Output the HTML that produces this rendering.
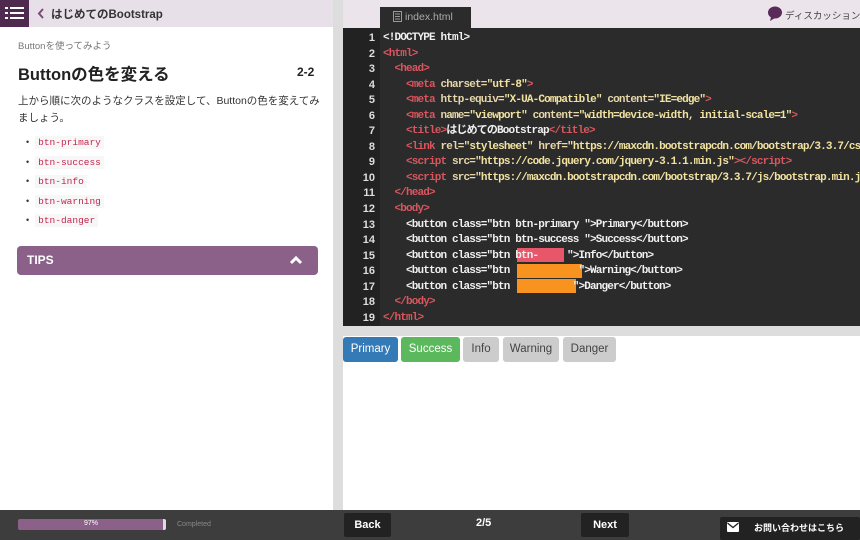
<!DOCTYPE html>
<html><head><meta charset="utf-8"><style>
*{margin:0;padding:0;box-sizing:border-box}
body{width:860px;height:540px;overflow:hidden;position:relative;background:#fff;font-family:"Liberation Sans","Noto Sans CJK JP",sans-serif}
.abs{position:absolute;white-space:nowrap}
.code{font-family:"Liberation Mono","Noto Sans CJK JP",monospace;font-size:11px;letter-spacing:-0.85px;font-weight:bold;color:#f0f0f0;white-space:pre}
.t{color:#d9565e}.a{color:#e6d6a8}.s{color:#f2e2a0}
.li{position:absolute;left:26px;font-size:9px;color:#333}
.li span{font-family:"Liberation Mono",monospace;font-size:9.5px;color:#c7254e;background:#f7f7f7;padding:1px 3px;margin-left:6px}
.btn{position:absolute;top:337px;height:25px;border-radius:3px;font-size:11.5px;line-height:25px;text-align:center}
</style></head><body>
<div class="abs" style="left:0;top:0;width:333px;height:27px;background:#e8e0e8"></div>
<div class="abs" style="left:0;top:0;width:29px;height:27px;background:#4e2a4e"></div>
<svg class="abs" style="left:5px;top:6px" width="19" height="15"><g fill="#fff"><rect x="0" y="1" width="3" height="2"/><rect x="5" y="1" width="14" height="2"/><rect x="0" y="6" width="3" height="2"/><rect x="5" y="6" width="14" height="2"/><rect x="0" y="11" width="3" height="2"/><rect x="5" y="11" width="14" height="2"/></g></svg>
<svg class="abs" style="left:37px;top:8px" width="8" height="11"><path d="M6 1L2 5.5L6 10" stroke="#7a4a7a" stroke-width="2" fill="none"/></svg>
<div class="abs" style="left:51px;top:6px;font-size:11.5px;font-weight:bold;color:#333">はじめてのBootstrap</div>
<div class="abs" style="left:18px;top:38px;font-size:9.5px;color:#777">Buttonを使ってみよう</div>
<div class="abs" style="left:18px;top:61px;font-size:16.5px;font-weight:bold;color:#222">Buttonの色を変える</div>
<div class="abs" style="left:297px;top:65px;font-size:12px;font-weight:bold;color:#222">2-2</div>
<div style="position:absolute;left:18px;top:93px;width:305px;font-size:10.5px;line-height:17px;color:#333">上から順に次のようなクラスを設定して、Buttonの色を変えてみましょう。</div>
<div class="li" style="top:137px">•<span>btn-primary</span></div>
<div class="li" style="top:157px">•<span>btn-success</span></div>
<div class="li" style="top:176px">•<span>btn-info</span></div>
<div class="li" style="top:196px">•<span>btn-warning</span></div>
<div class="li" style="top:215px">•<span>btn-danger</span></div>
<div class="abs" style="left:17px;top:246px;width:301px;height:29px;background:#8b6189;border-radius:4px"></div>
<div class="abs" style="left:27px;top:253px;font-size:12px;font-weight:bold;color:#fff">TIPS</div>
<svg class="abs" style="left:289px;top:255px" width="14" height="10"><path d="M2 8L7 3L12 8" stroke="#fff" stroke-width="3" fill="none"/></svg>
<div class="abs" style="left:333px;top:0;width:10px;height:510px;background:#ddd"></div>
<div class="abs" style="left:343px;top:0;width:517px;height:28px;background:#ebe5eb"></div>
<div class="abs" style="left:380px;top:7px;width:91px;height:21px;background:#2b2b2b"></div>
<svg class="abs" style="left:393px;top:11px" width="9" height="11"><rect x="0.5" y="0.5" width="8" height="10" fill="none" stroke="#999"/><path d="M2 3h5M2 5.5h5M2 8h5" stroke="#999"/></svg>
<div class="abs" style="left:405px;top:11px;font-size:10.5px;color:#aaa">index.html</div>
<svg class="abs" style="left:767px;top:6px" width="16" height="15"><ellipse cx="8" cy="6.5" rx="7" ry="6" fill="#5a2a5a"/><path d="M4 11L3 15L8 12Z" fill="#5a2a5a"/></svg>
<div class="abs" style="left:785px;top:8px;font-size:9.5px;color:#444">ディスカッション</div>
<div class="abs" style="left:343px;top:28px;width:517px;height:298px;background:#2b2b2b"></div>
<div class="abs" style="left:343px;top:28px;width:37px;height:298px;background:#222"></div>
<div class="abs" style="left:517px;top:248px;width:47px;height:14px;background:#e8566a"></div>
<div class="abs" style="left:517px;top:264px;width:65px;height:14px;background:#f7931e"></div>
<div class="abs" style="left:517px;top:279px;width:59px;height:14px;background:#f7931e"></div>
<div class="abs code" style="left:383px;top:31px;line-height:15.55px">&lt;!DOCTYPE html&gt;
<span class="t">&lt;html&gt;</span>
  <span class="t">&lt;head&gt;</span>
    <span class="t">&lt;meta</span> <span class="a">charset=</span><span class="s">"utf-8"</span><span class="t">&gt;</span>
    <span class="t">&lt;meta</span> <span class="a">http-equiv=</span><span class="s">"X-UA-Compatible"</span> <span class="a">content=</span><span class="s">"IE=edge"</span><span class="t">&gt;</span>
    <span class="t">&lt;meta</span> <span class="a">name=</span><span class="s">"viewport"</span> <span class="a">content=</span><span class="s">"width=device-width, initial-scale=1"</span><span class="t">&gt;</span>
    <span class="t">&lt;title&gt;</span>はじめてのBootstrap<span class="t">&lt;/title&gt;</span>
    <span class="t">&lt;link</span> <span class="a">rel=</span><span class="s">"stylesheet"</span> <span class="a">href=</span><span class="s">"https://maxcdn.bootstrapcdn.com/bootstrap/3.3.7/cs</span>
    <span class="t">&lt;script</span> <span class="a">src=</span><span class="s">"https://code.jquery.com/jquery-3.1.1.min.js"</span><span class="t">&gt;&lt;/script&gt;</span>
    <span class="t">&lt;script</span> <span class="a">src=</span><span class="s">"https://maxcdn.bootstrapcdn.com/bootstrap/3.3.7/js/bootstrap.min.j</span>
  <span class="t">&lt;/head&gt;</span>
  <span class="t">&lt;body&gt;</span>
    &lt;button class="btn btn-primary "&gt;Primary&lt;/button&gt;
    &lt;button class="btn btn-success "&gt;Success&lt;/button&gt;
    &lt;button class="btn btn-     "&gt;Info&lt;/button&gt;
    &lt;button class="btn            "&gt;Warning&lt;/button&gt;
    &lt;button class="btn           "&gt;Danger&lt;/button&gt;
  <span class="t">&lt;/body&gt;</span>
<span class="t">&lt;/html&gt;</span></div>
<div class="abs" style="left:343px;top:31px;width:32px;text-align:right;font-size:11px;font-weight:bold;color:#ddd;line-height:15.55px;white-space:pre">1
2
3
4
5
6
7
8
9
10
11
12
13
14
15
16
17
18
19</div>
<div class="abs" style="left:343px;top:326px;width:517px;height:10px;background:#ddd"></div>
<div class="btn" style="left:343px;width:55px;background:#337ab7;color:#fff">Primary</div>
<div class="btn" style="left:401px;width:59px;background:#5cb85c;color:#fff">Success</div>
<div class="btn" style="left:463px;width:36px;background:#ccc;color:#444">Info</div>
<div class="btn" style="left:503px;width:56px;background:#ccc;color:#444">Warning</div>
<div class="btn" style="left:563px;width:53px;background:#ccc;color:#444">Danger</div>
<div class="abs" style="left:0;top:510px;width:860px;height:30px;background:#3d3d3d"></div>
<div class="abs" style="left:18px;top:519px;width:148px;height:11px;background:#8b6189;border-radius:2px;border-right:3px solid #ddd"></div>
<div class="abs" style="left:84px;top:520px;font-size:7px;color:#fff">97%</div>
<div class="abs" style="left:177px;top:521px;font-size:7px;color:#888">Completed</div>
<div class="abs" style="left:344px;top:513px;width:47px;height:24px;background:#222;border-radius:2px;color:#fff;font-size:11px;font-weight:bold;text-align:center;line-height:24px">Back</div>
<div class="abs" style="left:476px;top:517px;font-size:11px;font-weight:bold;color:#fff">2/5</div>
<div class="abs" style="left:581px;top:513px;width:48px;height:24px;background:#222;border-radius:2px;color:#fff;font-size:11px;font-weight:bold;text-align:center;line-height:24px">Next</div>
<div class="abs" style="left:720px;top:517px;width:140px;height:23px;background:#222;border-radius:2px"></div>
<svg class="abs" style="left:727px;top:522px" width="12" height="10"><rect width="12" height="10" rx="1" fill="#fff"/><path d="M0.5 1L6 5.5L11.5 1" stroke="#222" stroke-width="1.3" fill="none"/></svg>
<div class="abs" style="left:754px;top:521px;font-size:9px;font-weight:bold;color:#fff">お問い合わせはこちら</div>
</body></html>
